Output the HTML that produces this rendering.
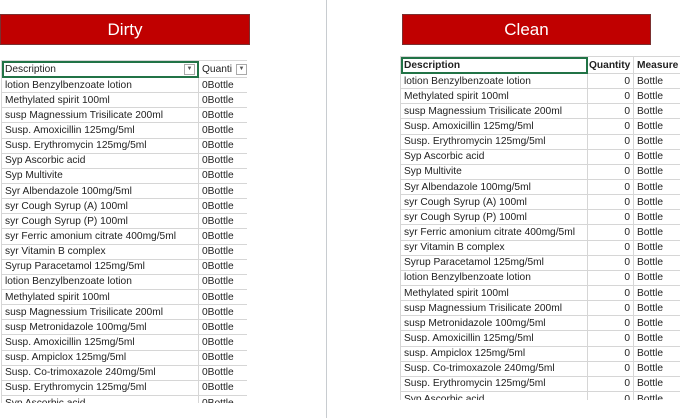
<!DOCTYPE html><html><head><style>
body{margin:0;width:680px;height:418px;background:#fff;position:relative;overflow:hidden;font-family:"Liberation Sans",sans-serif;}
.ban{position:absolute;top:14px;height:31px;background:#c00000;border:1px solid #7a3030;box-sizing:border-box;color:#fff;font-size:17px;text-align:center;line-height:30px;}
.vl{position:absolute;left:326px;top:0;width:1px;height:418px;background:#c8ccd0;}
.wrap{position:absolute;overflow:hidden;}
table{border-collapse:collapse;table-layout:fixed;font-size:10.2px;color:#222;}
td{height:15.15px;padding:0 0 0 3px;border:1px solid #d6d6d6;white-space:nowrap;overflow:hidden;box-sizing:border-box;line-height:13px;vertical-align:middle;}
.r{text-align:right;padding-right:3px;}
.hd td{height:17px;line-height:15px;position:relative;}
.sel{outline:2px solid #217346;outline-offset:-2px;}
.dd{position:absolute;right:2px;top:3px;width:9px;height:9px;border:1px solid #aaa;font-size:6px;line-height:9px;text-align:center;color:#555;background:#fff;}
</style></head><body>
<div class="ban" style="left:0;width:250px;">Dirty</div>
<div class="ban" style="left:402px;width:249px;">Clean</div>
<div class="vl"></div>

<div class="wrap" style="left:1px;top:60px;width:246px;height:343px;">
<table style="width:246px"><colgroup><col style="width:197px"><col style="width:49px"></colgroup>
<tr class="hd"><td class="sel">Description<span class="dd" style="right:3px">▼</span></td><td>Quanti<span class="dd" style="right:0">▼</span></td></tr>
<tr><td>lotion Benzylbenzoate lotion</td><td>0Bottle</td></tr>
<tr><td>Methylated spirit 100ml</td><td>0Bottle</td></tr>
<tr><td>susp Magnessium Trisilicate 200ml</td><td>0Bottle</td></tr>
<tr><td>Susp. Amoxicillin 125mg/5ml</td><td>0Bottle</td></tr>
<tr><td>Susp. Erythromycin 125mg/5ml</td><td>0Bottle</td></tr>
<tr><td>Syp Ascorbic acid</td><td>0Bottle</td></tr>
<tr><td>Syp Multivite</td><td>0Bottle</td></tr>
<tr><td>Syr Albendazole 100mg/5ml</td><td>0Bottle</td></tr>
<tr><td>syr Cough Syrup (A) 100ml</td><td>0Bottle</td></tr>
<tr><td>syr Cough Syrup (P) 100ml</td><td>0Bottle</td></tr>
<tr><td>syr Ferric amonium citrate 400mg/5ml</td><td>0Bottle</td></tr>
<tr><td>syr Vitamin B complex</td><td>0Bottle</td></tr>
<tr><td>Syrup Paracetamol 125mg/5ml</td><td>0Bottle</td></tr>
<tr><td>lotion Benzylbenzoate lotion</td><td>0Bottle</td></tr>
<tr><td>Methylated spirit 100ml</td><td>0Bottle</td></tr>
<tr><td>susp Magnessium Trisilicate 200ml</td><td>0Bottle</td></tr>
<tr><td>susp Metronidazole 100mg/5ml</td><td>0Bottle</td></tr>
<tr><td>Susp. Amoxicillin 125mg/5ml</td><td>0Bottle</td></tr>
<tr><td>susp. Ampiclox 125mg/5ml</td><td>0Bottle</td></tr>
<tr><td>Susp. Co-trimoxazole 240mg/5ml</td><td>0Bottle</td></tr>
<tr><td>Susp. Erythromycin 125mg/5ml</td><td>0Bottle</td></tr>
<tr><td>Syp Ascorbic acid</td><td>0Bottle</td></tr>
</table></div>

<div class="wrap" style="left:400px;top:56px;width:280px;height:344px;">
<table style="width:290px"><colgroup><col style="width:187px"><col style="width:46px"><col style="width:57px"></colgroup>
<tr class="hd" style="font-weight:bold"><td class="sel">Description</td><td style="padding-left:1px">Quantity</td><td>Measure</td></tr>
<tr><td>lotion Benzylbenzoate lotion</td><td class="r">0</td><td>Bottle</td></tr>
<tr><td>Methylated spirit 100ml</td><td class="r">0</td><td>Bottle</td></tr>
<tr><td>susp Magnessium Trisilicate 200ml</td><td class="r">0</td><td>Bottle</td></tr>
<tr><td>Susp. Amoxicillin 125mg/5ml</td><td class="r">0</td><td>Bottle</td></tr>
<tr><td>Susp. Erythromycin 125mg/5ml</td><td class="r">0</td><td>Bottle</td></tr>
<tr><td>Syp Ascorbic acid</td><td class="r">0</td><td>Bottle</td></tr>
<tr><td>Syp Multivite</td><td class="r">0</td><td>Bottle</td></tr>
<tr><td>Syr Albendazole 100mg/5ml</td><td class="r">0</td><td>Bottle</td></tr>
<tr><td>syr Cough Syrup (A) 100ml</td><td class="r">0</td><td>Bottle</td></tr>
<tr><td>syr Cough Syrup (P) 100ml</td><td class="r">0</td><td>Bottle</td></tr>
<tr><td>syr Ferric amonium citrate 400mg/5ml</td><td class="r">0</td><td>Bottle</td></tr>
<tr><td>syr Vitamin B complex</td><td class="r">0</td><td>Bottle</td></tr>
<tr><td>Syrup Paracetamol 125mg/5ml</td><td class="r">0</td><td>Bottle</td></tr>
<tr><td>lotion Benzylbenzoate lotion</td><td class="r">0</td><td>Bottle</td></tr>
<tr><td>Methylated spirit 100ml</td><td class="r">0</td><td>Bottle</td></tr>
<tr><td>susp Magnessium Trisilicate 200ml</td><td class="r">0</td><td>Bottle</td></tr>
<tr><td>susp Metronidazole 100mg/5ml</td><td class="r">0</td><td>Bottle</td></tr>
<tr><td>Susp. Amoxicillin 125mg/5ml</td><td class="r">0</td><td>Bottle</td></tr>
<tr><td>susp. Ampiclox 125mg/5ml</td><td class="r">0</td><td>Bottle</td></tr>
<tr><td>Susp. Co-trimoxazole 240mg/5ml</td><td class="r">0</td><td>Bottle</td></tr>
<tr><td>Susp. Erythromycin 125mg/5ml</td><td class="r">0</td><td>Bottle</td></tr>
<tr><td>Syp Ascorbic acid</td><td class="r">0</td><td>Bottle</td></tr>
</table></div>
</body></html>
